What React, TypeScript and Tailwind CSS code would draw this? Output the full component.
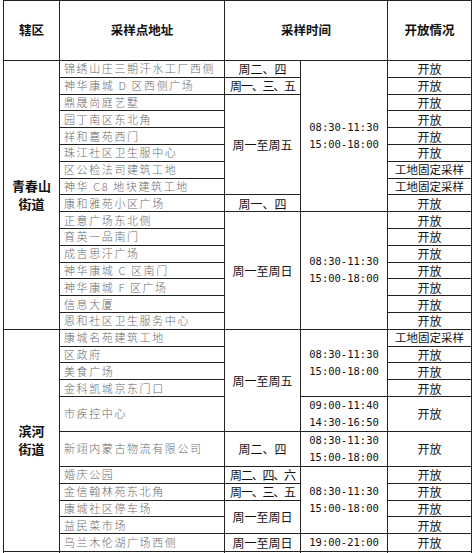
const CJK = "font-['Noto_Sans_CJK_SC',sans-serif]";

function Addr({ children }: { children: React.ReactNode }) {
	return (
		<td className="border border-[#222] pl-[4px] p-0 text-left align-middle text-[11px] leading-[15px] tracking-[1.6px] font-light text-[#6b6b6b] whitespace-nowrap overflow-hidden">
			{children}
		</td>
	);
}

function Cell({
	children,
	rowSpan,
	tight,
}: {
	children?: React.ReactNode;
	rowSpan?: number;
	tight?: boolean;
}) {
	return (
		<td
			rowSpan={rowSpan}
			className={
				tight
					? "border border-[#222] p-0 text-center align-middle text-[12px] leading-[15px] tracking-[-1.2px] text-[#111] whitespace-nowrap overflow-hidden"
					: "border border-[#222] p-0 text-center align-middle text-[12px] leading-[15px] text-[#111] whitespace-nowrap overflow-hidden"
			}
		>
			{children}
		</td>
	);
}

function Site() {
	return (
		<td className="border border-[#222] p-0 text-center align-middle text-[11.5px] leading-[15px] text-[#111] whitespace-nowrap overflow-hidden">
			工地固定采样
		</td>
	);
}

function Time({ lines, rowSpan }: { lines: string[]; rowSpan?: number }) {
	return (
		<td
			rowSpan={rowSpan}
			className="border border-[#222] p-0 text-center align-middle text-[10.5px] leading-[17px] text-[#111] font-['DejaVu_Sans_Mono',monospace] whitespace-nowrap"
		>
			{lines.map((l) => (
				<div key={l}>{l}</div>
			))}
		</td>
	);
}

const STD = ["08:30-11:30", "15:00-18:00"];
const R = "h-[16.8px]";
const R2 = "h-[33.6px]";

export default function App() {
	return (
		<div className={`min-h-screen bg-white pl-[3px] ${CJK}`}>
			<table className="w-[468px] table-fixed border-collapse border border-[#111]">
				<colgroup>
					<col className="w-[56px]" />
					<col className="w-[165px]" />
					<col className="w-[76px]" />
					<col className="w-[87px]" />
					<col className="w-[84px]" />
				</colgroup>
				<thead>
					<tr className="h-[60px]">
						<th className="border border-[#222] p-0 text-[12.5px] font-bold text-[#111]">辖区</th>
						<th className="border border-[#222] p-0 text-[12.5px] font-bold text-[#111]">采样点地址</th>
						<th colSpan={2} className="border border-[#222] p-0 text-[12.5px] font-bold text-[#111]">
							采样时间
						</th>
						<th className="border border-[#222] p-0 text-[12.5px] font-bold text-[#111]">开放情况</th>
					</tr>
				</thead>
				<tbody>
					<tr className={R}>
						<td rowSpan={16} className="border border-[#222] p-0 text-center align-middle text-[13px] leading-[18px] font-bold text-[#111]">
							<div>青春山</div>
							<div>街道</div>
						</td>
						<Addr>锦绣山庄三期汗水工厂西侧</Addr>
						<Cell>周二、四</Cell>
						<Time lines={STD} rowSpan={9} />
						<Cell>开放</Cell>
					</tr>
					<tr className={R}>
						<Addr>神华康城 D 区西侧广场</Addr>
						<Cell tight>周一、三、五</Cell>
						<Cell>开放</Cell>
					</tr>
					<tr className={R}>
						<Addr>鼎晟尚庭艺墅</Addr>
						<Cell rowSpan={6}>周一至周五</Cell>
						<Cell>开放</Cell>
					</tr>
					<tr className={R}>
						<Addr>园丁南区东北角</Addr>
						<Cell>开放</Cell>
					</tr>
					<tr className={R}>
						<Addr>祥和嘉苑西门</Addr>
						<Cell>开放</Cell>
					</tr>
					<tr className={R}>
						<Addr>珠江社区卫生服中心</Addr>
						<Cell>开放</Cell>
					</tr>
					<tr className={R}>
						<Addr>区公检法司建筑工地</Addr>
						<Site />
					</tr>
					<tr className={R}>
						<Addr>神华 C8 地块建筑工地</Addr>
						<Site />
					</tr>
					<tr className={R}>
						<Addr>康和雅苑小区广场</Addr>
						<Cell>周一、四</Cell>
						<Cell>开放</Cell>
					</tr>
					<tr className={R}>
						<Addr>正意广场东北侧</Addr>
						<Cell rowSpan={7}>周一至周日</Cell>
						<Time lines={STD} rowSpan={7} />
						<Cell>开放</Cell>
					</tr>
					<tr className={R}>
						<Addr>育英一品南门</Addr>
						<Cell>开放</Cell>
					</tr>
					<tr className={R}>
						<Addr>成吉思汗广场</Addr>
						<Cell>开放</Cell>
					</tr>
					<tr className={R}>
						<Addr>神华康城 C 区南门</Addr>
						<Cell>开放</Cell>
					</tr>
					<tr className={R}>
						<Addr>神华康城 F 区广场</Addr>
						<Cell>开放</Cell>
					</tr>
					<tr className={R}>
						<Addr>信息大厦</Addr>
						<Cell>开放</Cell>
					</tr>
					<tr className={R}>
						<Addr>恩和社区卫生服务中心</Addr>
						<Cell>开放</Cell>
					</tr>

					<tr className={R}>
						<td rowSpan={11} className="border border-[#222] p-0 text-center align-middle text-[13px] leading-[18px] font-bold text-[#111]">
							<div>滨河</div>
							<div>街道</div>
						</td>
						<Addr>康城名苑建筑工地</Addr>
						<Cell rowSpan={5}>周一至周五</Cell>
						<Time lines={STD} rowSpan={4} />
						<Site />
					</tr>
					<tr className={R}>
						<Addr>区政府</Addr>
						<Cell>开放</Cell>
					</tr>
					<tr className={R}>
						<Addr>美食广场</Addr>
						<Cell>开放</Cell>
					</tr>
					<tr className={R}>
						<Addr>金科凯城京东门口</Addr>
						<Cell>开放</Cell>
					</tr>
					<tr className={R2}>
						<Addr>市疾控中心</Addr>
						<Time lines={["09:00-11:40", "14:30-16:50"]} />
						<Cell>开放</Cell>
					</tr>
					<tr className={R2}>
						<Addr>新翊内蒙古物流有限公司</Addr>
						<Cell>周二、四</Cell>
						<Time lines={STD} />
						<Cell>开放</Cell>
					</tr>
					<tr className={R}>
						<Addr>婚庆公园</Addr>
						<Cell tight>周二、四、六</Cell>
						<Time lines={STD} rowSpan={4} />
						<Cell>开放</Cell>
					</tr>
					<tr className={R}>
						<Addr>金信翰林苑东北角</Addr>
						<Cell tight>周一、三、五</Cell>
						<Cell>开放</Cell>
					</tr>
					<tr className={R}>
						<Addr>康城社区停车场</Addr>
						<Cell rowSpan={2}>周一至周日</Cell>
						<Cell>开放</Cell>
					</tr>
					<tr className={R}>
						<Addr>益民菜市场</Addr>
						<Cell>开放</Cell>
					</tr>
					<tr className={R}>
						<Addr>乌兰木伦湖广场西侧</Addr>
						<Cell>周一至周日</Cell>
						<Time lines={["19:00-21:00"]} />
						<Cell>开放</Cell>
					</tr>
					<tr className="h-[17px]">
						<Cell />
						<Cell />
						<Cell />
						<Cell />
						<Cell />
					</tr>
				</tbody>
			</table>
		</div>
	);
}
